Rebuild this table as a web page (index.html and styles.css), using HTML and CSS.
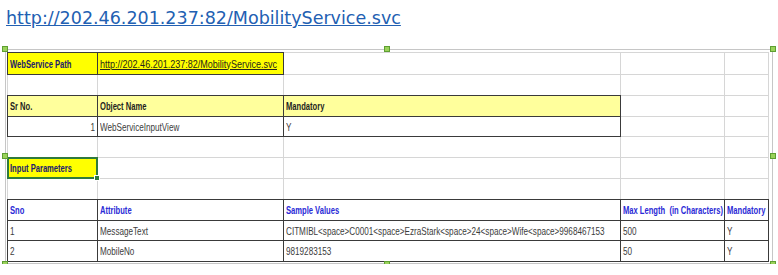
FILE: index.html
```html
<!DOCTYPE html>
<html>
<head>
<meta charset="utf-8">
<link rel="stylesheet" href="styles.css">
</head>
<body>
<div class="title"><a class="top-link" href="#">http://202.46.201.237:82/MobilityService.svc</a></div>
<div class="sheet">
  <div class="grid">
    <div class="c yel bd hdr-navy"><span class="t">WebService Path</span></div>
    <div class="c yel bd link-cell"><span class="t ul">http://202.46.201.237:82/MobilityService.svc</span></div>
    <div class="c"></div><div class="c"></div><div class="c"></div>

    <div class="c"></div><div class="c"></div><div class="c"></div><div class="c"></div><div class="c"></div>

    <div class="c pale bd bold"><span class="t">Sr No.</span></div>
    <div class="c pale bd bold"><span class="t">Object Name</span></div>
    <div class="c pale bd bold"><span class="t">Mandatory</span></div>
    <div class="c"></div><div class="c"></div>

    <div class="c bd num"><span class="t tr">1</span></div>
    <div class="c bd"><span class="t">WebServiceInputView</span></div>
    <div class="c bd"><span class="t">Y</span></div>
    <div class="c"></div><div class="c"></div>

    <div class="c"></div><div class="c"></div><div class="c"></div><div class="c"></div><div class="c"></div>

    <div class="c yel hdr-navy selected"><span class="t">Input Parameters</span></div>
    <div class="c"></div><div class="c"></div><div class="c"></div><div class="c"></div>

    <div class="c"></div><div class="c"></div><div class="c"></div><div class="c"></div><div class="c"></div>

    <div class="c bd hdr-blue"><span class="t">Sno</span></div>
    <div class="c bd hdr-blue"><span class="t">Attribute</span></div>
    <div class="c bd hdr-blue"><span class="t">Sample Values</span></div>
    <div class="c bd hdr-blue"><span class="t">Max Length&nbsp; (in Characters)</span></div>
    <div class="c bd hdr-blue"><span class="t">Mandatory</span></div>

    <div class="c bd"><span class="t">1</span></div>
    <div class="c bd"><span class="t">MessageText</span></div>
    <div class="c bd"><span class="t">CITMIBL&lt;space&gt;C0001&lt;space&gt;EzraStark&lt;space&gt;24&lt;space&gt;Wife&lt;space&gt;9968467153</span></div>
    <div class="c bd"><span class="t">500</span></div>
    <div class="c bd"><span class="t">Y</span></div>

    <div class="c bd"><span class="t">2</span></div>
    <div class="c bd"><span class="t">MobileNo</span></div>
    <div class="c bd"><span class="t">9819283153</span></div>
    <div class="c bd"><span class="t">50</span></div>
    <div class="c bd"><span class="t">Y</span></div>
  </div>
  <span class="handle h-tl"></span>
  <span class="handle h-tm"></span>
  <span class="handle h-tr"></span>
  <span class="handle h-ml"></span>
  <span class="handle h-mr"></span>
  <span class="handle h-bl"></span>
  <span class="handle h-bm"></span>
  <span class="handle h-br"></span>
</div>
</body>
</html>
```

FILE: styles.css
```css
html, body {
  margin: 0;
  padding: 0;
  background: #ffffff;
}

.title {
  padding: 8px 0 0 6px;
  height: 21px;
  line-height: 21px;
  font-family: "DejaVu Sans", sans-serif;
  font-size: 17.5px;
}

.top-link {
  color: #2260b2;
  text-decoration: underline;
}

.sheet {
  position: relative;
  width: 763px;
  margin: 20px 0 0 5px;
  padding: 2px 2px 1px 1px;
  border: 1px solid #c6c6c6;
  background: #ffffff;
}

.grid {
  display: grid;
  grid-template-columns: 89px 185px 336px 103px 43px;
  grid-template-rows: 21px 20px 20px 19px 20px 20px 20px 20px 19px 20px;
  gap: 1px;
  padding: 1px;
  background: #d6d6d6;
  width: 760px;
  font-family: "Liberation Sans", Arial, sans-serif;
  font-size: 11px;
  color: #3c3c3c;
}

.c {
  background: #ffffff;
  padding: 0 2px;
  white-space: nowrap;
  overflow: visible;
  display: flex;
  align-items: center;
}

.t {
  display: inline-block;
  transform: scaleX(0.74);
  transform-origin: left center;
}

.t.tr {
  transform-origin: right center;
}

.bd {
  outline: 1px solid #3a3a3a;
}

.yel {
  background: #ffff00;
}

.pale {
  background: #ffff9c;
}

.bold {
  font-weight: bold;
  color: #1e1e1e;
}

.hdr-navy {
  font-weight: bold;
  color: #20206e;
}

.hdr-blue {
  font-weight: bold;
  color: #2a2ad6;
}

.hdr-navy .t,
.hdr-blue .t,
.bold .t {
  transform: scaleX(0.69);
}

.link-cell .t {
  transform: scaleX(0.82);
}

.num {
  justify-content: flex-end;
}

.link-cell {
  color: #26261a;
}

.ul {
  text-decoration: underline;
}

.selected {
  position: relative;
  outline: 2px solid #2f7a3c;
  outline-offset: -1px;
}

.selected::after {
  content: "";
  position: absolute;
  right: -3px;
  bottom: -3px;
  width: 4px;
  height: 4px;
  background: #2f7a3c;
  border: 1px solid #ffffff;
}

.handle {
  position: absolute;
  width: 4px;
  height: 4px;
  background: #9ad25a;
  border: 1px solid #5e9f32;
}

.h-tl { left: -4px; top: -4px; }
.h-tm { left: 378px; top: -4px; }
.h-tr { right: -4px; top: -4px; }
.h-ml { left: -4px; top: 103px; }
.h-mr { right: -4px; top: 103px; }
.h-bl { left: -4px; bottom: -4px; }
.h-bm { left: 378px; bottom: -4px; }
.h-br { right: -4px; bottom: -4px; }
```
